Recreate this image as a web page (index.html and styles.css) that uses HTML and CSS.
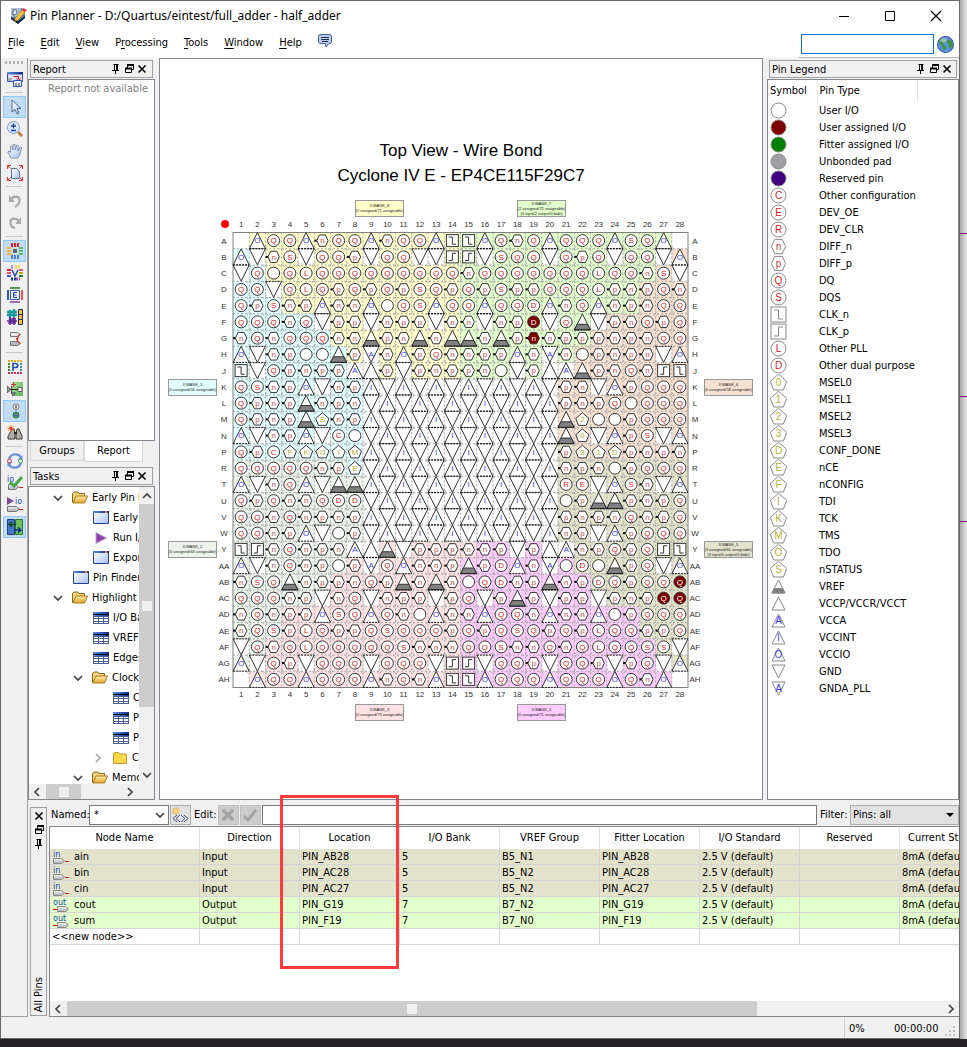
FILE: index.html
```html
<!DOCTYPE html>
<html lang="en">
<head>
    <meta charset="UTF-8">
    <meta name="viewport" content="width=device-width, initial-scale=1.0">
    <title>Pin Planner</title>
    <link rel="stylesheet" href="styles.css">
</head>
<body>
    <!-- shared icons -->
    <svg class="defs" width="0" height="0" aria-hidden="true">
        <defs>
            <linearGradient id="glass" x1="0" y1="0" x2="1" y2="1">
                <stop offset="0" stop-color="#fff"/><stop offset="1" stop-color="#a9c1ee"/>
            </linearGradient>
            <linearGradient id="gold" x1="0" y1="0" x2="0" y2="1">
                <stop offset="0" stop-color="#fdeaa8"/><stop offset="1" stop-color="#e0a52c"/>
            </linearGradient>
            <linearGradient id="steel" x1="0" y1="0" x2="0" y2="1">
                <stop offset="0" stop-color="#f4f4f4"/><stop offset="1" stop-color="#a9adb8"/>
            </linearGradient>
            <linearGradient id="navy" x1="0" y1="0" x2="1" y2="0">
                <stop offset="0" stop-color="#5c8de0"/><stop offset="1" stop-color="#0c2c88"/>
            </linearGradient>
            <linearGradient id="leaf" x1="0" y1="0" x2="1" y2="1">
                <stop offset="0" stop-color="#a8dc98"/><stop offset="1" stop-color="#5db552"/>
            </linearGradient>
        </defs>
        <symbol id="i-pin" viewBox="0 0 10 10"><path d="M2.500.5h5M3.500.5v6M6.500.5v6M5.500.5v6M1 6.500h7M4.500 6.500V10" fill="none" stroke="#000"/></symbol>
        <symbol id="i-restore" viewBox="0 0 10 10"><path d="M3.500 4V1.500h6v4H7M1.500 4.500h6v4h-6z" fill="none" stroke="#000"/><path d="M3 0h7v2H3zM1 3.500h7v2H1z"/></symbol>
        <symbol id="i-close" viewBox="0 0 10 10"><path d="M1.500 1.500l7 7M8.500 1.500l-7 7" stroke="#000" stroke-width="1.600"/></symbol>
        <symbol id="i-down" viewBox="0 0 10 10"><path d="M1 3l4 4 4-4" fill="none" stroke="#444" stroke-width="1.700"/></symbol>
        <symbol id="i-up" viewBox="0 0 10 10"><path d="M1 7l4-4 4 4" fill="none" stroke="#444" stroke-width="1.700"/></symbol>
        <symbol id="i-left" viewBox="0 0 10 10"><path d="M7 1L3 5l4 4" fill="none" stroke="#444" stroke-width="1.700"/></symbol>
        <symbol id="i-right" viewBox="0 0 10 10"><path d="M3 1l4 4-4 4" fill="none" stroke="#444" stroke-width="1.700"/></symbol>
        <symbol id="i-closed" viewBox="0 0 10 10"><path d="M3 1l4 4-4 4" fill="none" stroke="#a6a6a6" stroke-width="1.700"/></symbol>
        <symbol id="i-open" viewBox="0 0 16 16"><path d="M.5 12.500V3.500L2 2h4l1 1.500h5.500V6" fill="#f6d67a" stroke="#8a6420"/><path d="M.8 13L4 6h11.500l-3 7z" fill="url(#gold)" stroke="#a87a1e"/></symbol>
        <symbol id="i-folder" viewBox="0 0 16 16"><path d="M1.500 13.500v-10L3 2.500h3.500L8 4h6.500v9.500z" fill="#ffd94a" stroke="#c49a28"/></symbol>
        <symbol id="i-win" viewBox="0 0 16 16"><path d="M.5 1.500h15v12H.5z" fill="url(#glass)" stroke="#1d3f96"/><path d="M0 1h16v2H0z" fill="url(#navy)"/><path d="M12 1h2v2h-2z" fill="#f08020"/></symbol>
        <symbol id="i-table" viewBox="0 0 16 16"><path d="M0 2h16v4H0z" fill="url(#navy)"/><path d="M0 4h16v1H0z" fill="#000"/><path d="M0 6h16v8H0z" fill="#4a5f90"/><path d="M1 7h4v1H1zM6 7h4v1H6zM11 7h4v1h-4zM1 9h4v2H1zM6 9h4v2H6zM11 9h4v2h-4zM1 12h4v1H1zM6 12h4v1H6zM11 12h4v1h-4z" fill="#fff"/></symbol>
        <symbol id="i-run" viewBox="0 0 16 16"><path d="M3 2.500L13.500 8 3 13.500z" fill="#8e44ad" stroke="#b9a6c8"/></symbol>
        <symbol id="i-port-in" viewBox="0 0 16 6"><path d="M.5.500h8l3 2.500-3 2.500h-8z" fill="url(#steel)" stroke="#888"/><path d="M12 3.500h4" stroke="#e02020"/></symbol>
        <symbol id="i-port-out" viewBox="0 0 16 6"><path d="M4.500.500h8l3 2.500-3 2.500h-8z" fill="url(#steel)" stroke="#888"/><path d="M0 3.500h4" stroke="#e02020"/></symbol>
    </svg>

    <div class="window">
        <header class="titlebar">
            <svg class="app-icon" viewBox="0 0 18 18"><path d="M2 1h11l3 4v6l-7 6-7-5z" fill="#5f83a8"/><path d="M2 1l10 0-1 8-9 1z" fill="#aebfd2"/><path d="M4 3v5h2l2-2V4L6.500 3z" fill="#e6edf4" stroke="#4a6384"/><path d="M2 12l7 5 7-6v-2l-7 5-7-4z" fill="#1d2940"/><path d="M6 12L13 3l3 2-7 8-3 1z" fill="#ffc23a" stroke="#b97b14" stroke-width=".6"/><path d="M13 3l1.500-2L18 3l-2 2z" fill="#e0343c"/></svg>
            <h1 class="title">Pin Planner - D:/Quartus/eintest/full_adder - half_adder</h1>
            <div class="window-buttons">
                <button class="win-btn" aria-label="Minimize"><svg viewBox="0 0 12 12"><path d="M1 6.500h10" stroke="#000"/></svg></button>
                <button class="win-btn" aria-label="Maximize"><svg viewBox="0 0 12 12"><path d="M1.500 1.500h9v9h-9z" fill="none" stroke="#000"/></svg></button>
                <button class="win-btn" aria-label="Close"><svg viewBox="0 0 12 12"><path d="M1 1l10 10M11 1L1 11" stroke="#000" stroke-width="1.200"/></svg></button>
            </div>
        </header>

        <div class="menubar">
            <nav class="menu">
                <button><u>F</u>ile</button>
                <button><u>E</u>dit</button>
                <button><u>V</u>iew</button>
                <button>P<u>r</u>ocessing</button>
                <button><u>T</u>ools</button>
                <button><u>W</u>indow</button>
                <button><u>H</u>elp</button>
                <button aria-label="Feedback"><svg width="14" height="14" viewBox="0 0 14 14"><path d="M1.500.5h11l1 1.500v6l-1 1.500H11L8 13 7.500 9.500h-6L.5 8V2z" fill="#b9cbe6" stroke="#46628f"/><path d="M3 3.500h8M3 5.500h8M4 7.500h6" stroke="#1e3257"/></svg></button>
            </nav>
            <div class="search">
                <input type="text" aria-label="Search">
                <svg class="globe" viewBox="0 0 16 16"><circle cx="8" cy="8" r="7.500" fill="#5c93e6" stroke="#36589c"/><path d="M2 4l3-2 3 1 1 2-3 1 0 2 3 2-1 3-2 1-1-4-2-2zM10 3l3 1 2 4-2 4-2-1 0-3-2-2z" fill="#3f9440"/><ellipse cx="6" cy="4" rx="3" ry="2" fill="#fff" opacity=".45"/></svg>
            </div>
        </div>

        <div class="workspace">
            <aside class="toolbar">
                <div class="grip"></div>
                <button class="tool" aria-label="Detach window"><svg viewBox="0 0 16 16"><path d="M.5 1.500h15v9H.5z" fill="#dfe5ee" stroke="#2a56b0"/><path d="M0 1h16v2.500H0z" fill="url(#navy)"/><path d="M2 7v3M4 7v3" stroke="#777"/><path d="M6.500 5.500h5v3M9.500 7.500l2 2.500 2-2.500" fill="none" stroke="#d0103c"/><path d="M6.500 9.500h8v6h-8z" fill="#eef" stroke="#2a56b0"/><path d="M9 12v3M12 12v3" stroke="#333"/></svg></button>
                <hr>
                <button class="tool on" aria-label="Selection tool"><svg viewBox="0 0 16 16"><path d="M5 1v12l3-2.500 2 4.500 2-1-2-4.500h4z" fill="url(#glass)" stroke="#536a86"/></svg></button>
                <button class="tool" aria-label="Zoom tool"><svg viewBox="0 0 16 16"><path d="M11 11l4 4" stroke="#c08440" stroke-width="3"/><circle cx="6.500" cy="6.500" r="6" fill="#dbe8fa" stroke="#7e9cc4"/><path d="M4 5h5M6.500 2.500v5M4 9.500h5" stroke="#16449c" stroke-width="1.300"/></svg></button>
                <button class="tool" aria-label="Hand tool"><svg viewBox="0 0 16 16"><path d="M4 15L1 9.500 1.500 8l2 1.500V3.500L5 3l1 4V1.500h1.800L8.500 7l1-5 1.700.3L11 8l2-4 1.500.5L13 11l-2 4z" fill="url(#glass)" stroke="#6c83a4" stroke-width=".8"/></svg></button>
                <button class="tool" aria-label="Fit in window"><svg viewBox="0 0 16 16"><path d="M4.500 3.500h5l3 3v7h-8z" fill="url(#glass)" stroke="#5d7595"/><path d="M.5 4V.5H4M12 .5h3.500V4M.5 12v3.500H4M12 15.500h3.500V12M.5.5l3 3M15.500.5l-3 3M.5 15.500l3-3M15.500 15.500l-3-3" fill="none" stroke="#e8303a"/></svg></button>
                <hr>
                <button class="tool" aria-label="Undo"><svg viewBox="0 0 16 16"><path d="M3.500 6.500C7 2 13 3 12.500 7.500c0 3-2 5-4.500 6.500" fill="none" stroke="#aaa" stroke-width="2.200"/><path d="M2 2v7h6z" fill="#aaa"/></svg></button>
                <button class="tool" aria-label="Redo"><svg viewBox="0 0 16 16"><path d="M12.500 6.500C9 2 3 3 3.500 7.500c0 3 2 5 4.500 5.500" fill="none" stroke="#aaa" stroke-width="2.200"/><path d="M14 2v7H8z" fill="#aaa"/></svg></button>
                <hr>
                <button class="tool on" aria-label="Show I/O banks"><svg viewBox="0 0 16 16"><path d="M4 2h8" stroke="#e02028" stroke-width="4" stroke-dasharray="2 1"/><path d="M4 14h8" stroke="#4a7fe0" stroke-width="4" stroke-dasharray="2 1"/><path d="M2 4v8" stroke="#ffb020" stroke-width="4" stroke-dasharray="2 1"/><path d="M14 4v8" stroke="#5cb85c" stroke-width="4" stroke-dasharray="2 1"/><path d="M6 6h4v4H6z" fill="#666"/></svg></button>
                <button class="tool" aria-label="Show VREF groups"><svg viewBox="0 0 16 16"><path d="M4 2h3" stroke="#c98ae8" stroke-width="4" stroke-dasharray="2 1"/><path d="M8 2h5" stroke="#f0e060" stroke-width="4" stroke-dasharray="2 1"/><path d="M4 14h5" stroke="#1c3f9c" stroke-width="3" stroke-dasharray="2 1"/><path d="M9 14h4" stroke="#9c50b8" stroke-width="3" stroke-dasharray="2 1"/><path d="M0 5h4" stroke="#e02028" stroke-width="2"/><path d="M0 8h4" stroke="#e02028" stroke-width="1.500"/><path d="M0 11h4" stroke="#3a66d8" stroke-width="2"/><path d="M12 5h4" stroke="#e0508c" stroke-width="2"/><path d="M12 8h4" stroke="#b8a800" stroke-width="2"/><path d="M12 11h4" stroke="#2c7a2c" stroke-width="2"/><path d="M5 5l3 6 3-6" fill="none" stroke="#2a50b0" stroke-width="1.600"/></svg></button>
                <button class="tool" aria-label="Show edges"><svg viewBox="0 0 16 16"><path d="M3.500 3.500h9v9h-9z" fill="#f1f5ff" stroke="#3457a8"/><path d="M3 1h10" stroke="#3c8a3c" stroke-width="1.800"/><path d="M3 15h10" stroke="#9858b4" stroke-width="1.800"/><path d="M1 3v10" stroke="#2448b0" stroke-width="1.800"/><path d="M15 3v10" stroke="#f04040" stroke-width="1.800"/><path d="M10 5.500H6.500v5H10M6.500 8h3" fill="none" stroke="#1c3f9c"/></svg></button>
                <button class="tool" aria-label="Show DQ/DQS pins"><svg viewBox="0 0 16 16"><path d="M3 1v8M7 0v8M0 3h10M0 6h10" stroke="#1c9a9a" stroke-width="2.400"/><path d="M2 9h7v6H1z" fill="#8848b0"/><path d="M3 8v8M7 8v8M0 12h10" stroke="#5c2a90" stroke-width="1.500"/><path d="M11.500.5h4v15h-4z" fill="#ffc020" stroke="#1a2c70"/><path d="M11 5.500h5M11 10.500h5" stroke="#1a2c70"/></svg></button>
                <button class="tool" aria-label="Show differential pairs"><svg viewBox="0 0 16 16"><path d="M3.500 1.500h7l3 2-3 2h-7zM3.500 10.500h7l3 2-3 2h-7z" fill="url(#steel)" stroke="#777"/><path d="M13 3.500C9 5 13 8 9 8c3 0 0 3 4 4" fill="none" stroke="#e02828" stroke-width="1.300"/></svg></button>
                <hr>
                <button class="tool" aria-label="Show pins"><svg viewBox="0 0 16 16"><path d="M1 2h14" stroke="#e8a820" stroke-width="2" stroke-dasharray="2 1"/><path d="M1 14h14" stroke="#d03050" stroke-width="2" stroke-dasharray="2 1"/><path d="M2 4v9" stroke="#3c8a2c" stroke-width="2" stroke-dasharray="2 1"/><path d="M14 4v9" stroke="#4a8a9c" stroke-width="2" stroke-dasharray="2 1"/><path d="M6 12V4.500h2.500c3 0 3 4 0 4H6" fill="none" stroke="#2a50b0" stroke-width="1.700"/></svg></button>
                <button class="tool" aria-label="Board view"><svg viewBox="0 0 16 16"><path d="M5 1h11v14H5z" fill="url(#leaf)"/><path d="M0 5v7l4-3.500zM4.500 5v8" fill="#999" stroke="#555"/><path d="M4 8.500h7" stroke="#222"/><path d="M11 6.500h4v4h-4z" fill="#eee" stroke="#666"/><path d="M4 3.500h5M6.500 1v5" stroke="#d03040"/><path d="M4 12h5M5 14h3" stroke="#4a2a7a"/></svg></button>
                <button class="tool on" aria-label="Show pin numbers"><svg viewBox="0 0 16 16"><circle cx="9" cy="4" r="3" fill="#ddd" stroke="#888"/><path d="M9 2.500v3" stroke="#333"/><circle cx="9" cy="12" r="3" fill="#5cb85c" stroke="#2a6a4a"/><circle cx="9" cy="12" r="1.200" fill="#eef" stroke="#1c3f9c"/></svg></button>
                <button class="tool" aria-label="Find pins"><svg viewBox="0 0 16 16"><path d="M3 8l2-4h2l1 4v6H1v-3zM9 8l1-4h2l3 7v3H9z" fill="#b4b0a4" stroke="#3a3832"/><path d="M7 8h3" stroke="#222" stroke-width="2"/><path d="M4 0v7M.5 3.500h7M1.500 1l5 5M6.500 1l-5 5" stroke="#e88a20"/><circle cx="4" cy="3.500" r="1.500" fill="#e03050"/></svg></button>
                <hr>
                <button class="tool" aria-label="Swap pins"><svg viewBox="0 0 16 16"><path d="M2 6c2-6 10-6 12-1M14 10c-2 6-10 6-12 1" fill="none" stroke="#6d94d8" stroke-width="2.400"/><path d="M15.500 2v5h-5zM.5 14V9h5z" fill="#6d94d8"/><circle cx="2.500" cy="8" r="2" fill="#fff" stroke="#e03050"/><circle cx="13.500" cy="8" r="2" fill="#fff" stroke="#3c9a4c"/></svg></button>
                <button class="tool" aria-label="Live I/O check"><svg viewBox="0 0 16 16"><text x="0" y="7" class="port-text">io</text><path d="M1.500 9.500h7l3 2.500-3 2.500h-7z" fill="url(#steel)" stroke="#777"/><path d="M12 12.500h4" stroke="#e02020"/><path d="M3 7l4 4 8-9" fill="none" stroke="#4aa84a" stroke-width="3"/></svg></button>
                <button class="tool" aria-label="Run I/O analysis"><svg viewBox="0 0 16 16"><path d="M0 0l7 4-7 4z" fill="#7d4a9c"/><text x="8" y="7" class="port-text">io</text><path d="M.5 9.500h9l3 2.500-3 2.500h-9z" fill="url(#steel)" stroke="#777"/><path d="M12 12.500h4" stroke="#e02020"/></svg></button>
                <button class="tool on" aria-label="Pin migration"><svg viewBox="0 0 16 16"><path d="M.5.500h7v15h-7z" fill="#4a78c8" stroke="#1c3f8c"/><path d="M8.500.500h7v15h-7z" fill="#6cc05c" stroke="#2c7a2c"/><path d="M9 5.500H2M5 3L2 5.500 5 8" fill="none" stroke="#0c4a20" stroke-width="1.400"/><path d="M7 11h7M11 8.500l3 2.500-3 2.500" fill="none" stroke="#0c2c88" stroke-width="1.400"/></svg></button>
            </aside>

            <div class="docks">
                <div class="upper">
                    <div class="left-dock">
                        <section class="dock">
                            <div class="dock-title"><h2>Report</h2><button aria-label="Auto hide"><svg><use href="#i-pin"/></svg></button><button aria-label="Float"><svg><use href="#i-restore"/></svg></button><button aria-label="Close"><svg><use href="#i-close"/></svg></button></div>
                            <div class="dock-body report">Report not available</div>
                            <div class="tabs">
                                <button class="tab">Groups</button>
                                <button class="tab active">Report</button>
                            </div>
                        </section>
                        <section class="dock tasks">
                            <div class="dock-title"><h2>Tasks</h2><button aria-label="Auto hide"><svg><use href="#i-pin"/></svg></button><button aria-label="Float"><svg><use href="#i-restore"/></svg></button><button aria-label="Close"><svg><use href="#i-close"/></svg></button></div>
                            <div class="dock-body tree-box">
                                <ul class="tree" id="tree"></ul>
                                <div class="vscroll"><svg><use href="#i-up"/></svg><div class="thumb"></div><svg><use href="#i-down"/></svg></div>
                                <div class="hscroll"><svg><use href="#i-left"/></svg><div class="thumb"></div><svg><use href="#i-right"/></svg></div>
                            </div>
                        </section>
                    </div>

                    <main class="canvas">
                        <p class="device">Top View - Wire Bond</p>
                        <p class="device">Cyclone IV E - EP4CE115F29C7</p>
                        <svg class="package" id="package" viewBox="0 0 586 522" width="586" height="522"></svg>
                    </main>

                    <section class="dock legend-dock">
                        <div class="dock-title"><h2>Pin Legend</h2><button aria-label="Auto hide"><svg><use href="#i-pin"/></svg></button><button aria-label="Float"><svg><use href="#i-restore"/></svg></button><button aria-label="Close"><svg><use href="#i-close"/></svg></button></div>
                        <div class="dock-body">
                            <table class="legend">
                                <thead><tr><th>Symbol</th><th>Pin Type</th><th></th></tr></thead>
                                <tbody id="legend"></tbody>
                            </table>
                        </div>
                    </section>
                </div>

                <section class="pins-dock">
                    <div class="side-title">
                        <button aria-label="Close"><svg><use href="#i-close"/></svg></button>
                        <button aria-label="Float"><svg><use href="#i-restore"/></svg></button>
                        <button aria-label="Auto hide"><svg><use href="#i-pin"/></svg></button>
                        <h2>All Pins</h2>
                    </div>
                    <div class="pins">
                        <div class="filters">
                            <label for="named">Named:</label>
                            <span class="combo named"><select id="named"><option>*</option></select><svg><use href="#i-down"/></svg></span>
                            <button class="flat" aria-label="Node finder"><svg viewBox="0 0 18 18"><path d="M6 9l-4 3.500L6 16M9 9l-4 3.500L9 16M10 9l4 3.500-4 3.500M13 9l4 3.500-4 3.500" fill="none" stroke="#3c5484"/><path d="M5 1v8M1 5h8M2 2l6 6M8 2L2 8" stroke="#f0a820"/><circle cx="5" cy="5" r="1.500" fill="#ffe860"/></svg></button>
                            <label class="edit-label" for="edit">Edit:</label>
                            <button class="flat off" aria-label="Cancel edit"><svg viewBox="0 0 18 18"><path d="M4 4l10 10M14 4L4 14" stroke="#a4a4a4" stroke-width="3.500"/></svg></button>
                            <button class="flat off" aria-label="Accept edit"><svg viewBox="0 0 18 18"><path d="M3 10l4 4 8-10" fill="none" stroke="#a4a4a4" stroke-width="3"/></svg></button>
                            <input class="edit" id="edit" type="text">
                            <label class="filter-label" for="filter">Filter:</label>
                            <span class="combo filter"><select id="filter"><option>Pins: all</option></select><svg viewBox="0 0 10 10"><path d="M1 3h8L5 7z"/></svg></span>
                        </div>
                        <div class="grid-box">
                            <table class="nodes">
                                <thead>
                                    <tr><th class="wide">Node Name</th><th>Direction</th><th>Location</th><th>I/O Bank</th><th>VREF Group</th><th>Fitter Location</th><th>I/O Standard</th><th>Reserved</th><th>Current Strength</th></tr>
                                </thead>
                                <tbody>
                                    <tr class="bank5"><td><span class="port">in<svg><use href="#i-port-in"/></svg></span>ain</td><td>Input</td><td>PIN_AB28</td><td>5</td><td>B5_N1</td><td>PIN_AB28</td><td>2.5 V (default)</td><td></td><td>8mA (default)</td></tr>
                                    <tr class="bank5"><td><span class="port">in<svg><use href="#i-port-in"/></svg></span>bin</td><td>Input</td><td>PIN_AC28</td><td>5</td><td>B5_N2</td><td>PIN_AC28</td><td>2.5 V (default)</td><td></td><td>8mA (default)</td></tr>
                                    <tr class="bank5"><td><span class="port">in<svg><use href="#i-port-in"/></svg></span>cin</td><td>Input</td><td>PIN_AC27</td><td>5</td><td>B5_N2</td><td>PIN_AC27</td><td>2.5 V (default)</td><td></td><td>8mA (default)</td></tr>
                                    <tr class="bank7"><td><span class="port">out<svg><use href="#i-port-out"/></svg></span>cout</td><td>Output</td><td>PIN_G19</td><td>7</td><td>B7_N2</td><td>PIN_G19</td><td>2.5 V (default)</td><td></td><td>8mA (default)</td></tr>
                                    <tr class="bank7"><td><span class="port">out<svg><use href="#i-port-out"/></svg></span>sum</td><td>Output</td><td>PIN_F19</td><td>7</td><td>B7_N0</td><td>PIN_F19</td><td>2.5 V (default)</td><td></td><td>8mA (default)</td></tr>
                                    <tr><td>&lt;&lt;new node&gt;&gt;</td><td></td><td></td><td></td><td></td><td></td><td></td><td></td><td></td></tr>
                                </tbody>
                            </table>
                            <div class="hscroll"><svg><use href="#i-left"/></svg><div class="thumb"></div><svg><use href="#i-right"/></svg></div>
                        </div>
                    </div>
                    <div class="marker"></div>
                </section>
            </div>
        </div>

        <footer class="statusbar">
            <span class="progress">0%</span>
            <span class="elapsed">00:00:00</span>
            <svg class="size-grip" viewBox="0 0 12 12"><path d="M8 0h2v2H8zM4 4h2v2H4zM8 4h2v2H8zM0 8h2v2H0zM4 8h2v2H4zM8 8h2v2H8z" fill="#bfbfbf"/></svg>
        </footer>
    </div>
    <script src="script.js"></script>
</body>
</html>
```
FILE: styles.css
```css
* {
    box-sizing: border-box;
}
body {
    margin: 0;
    height: 100vh;
    padding: 0 7px 8px 0;
    font-family: "DejaVu Sans Condensed", "DejaVu Sans", sans-serif;
    font-size: 11px;
    line-height: 16px;
    color: #000;
    background:
        linear-gradient(#231f25, #231f25) left bottom / 100% 8px no-repeat,
        linear-gradient(#800080, #800080) right 0 top 233px / 7px 1px no-repeat,
        linear-gradient(#800080, #800080) right 0 top 396px / 7px 1px no-repeat,
        linear-gradient(#800080, #800080) right 0 top 521px / 7px 1px no-repeat,
        linear-gradient(to right, #a8a8a8, #e8e8e8) right top / 7px 100% no-repeat,
        #f0f0f0;
}
h1, h2, p, ul {
    margin: 0;
    padding: 0;
    font-size: inherit;
    font-weight: normal;
}
button {
    border: 0;
    padding: 0;
    background: none;
    font: inherit;
    color: inherit;
}
input, select {
    font: inherit;
    color: inherit;
    border-radius: 0;
    margin: 0;
}
table {
    border-collapse: collapse;
}
.defs {
    position: absolute;
}
.port-text {
    font: 9px "DejaVu Sans Condensed", "DejaVu Sans", sans-serif;
    fill: #1c4cb0;
}

/* window frame */
.window {
    height: 100%;
    display: flex;
    flex-direction: column;
    background: #f0f0f0;
    border: 1px solid #6b696c;
    overflow: hidden;
}
.titlebar {
    display: flex;
    align-items: center;
    height: 30px;
    padding-left: 8px;
    background: #fff;
}
.app-icon {
    width: 18px;
    height: 18px;
}
.title {
    flex: 1;
    padding-left: 3px;
    font-family: "Noto Sans", sans-serif;
    font-size: 12px;
}
.window-buttons {
    display: flex;
}
.win-btn {
    width: 46px;
    height: 28px;
}
.win-btn svg {
    width: 12px;
    height: 12px;
    display: block;
    margin: auto;
}
.menubar {
    display: flex;
    justify-content: space-between;
    height: 27px;
    background: #fff;
}
.menu {
    display: flex;
    gap: 16px;
    padding: 2px 7px 0;
    height: 22px;
}
.menu u {
    text-underline-offset: 2px;
}
.search {
    display: flex;
    gap: 3px;
    padding: 3px 5px 0 2px;
    border-bottom: 1px solid #b0b0b0;
}
.search input {
    width: 133px;
    height: 20px;
    border: 1px solid #0078d7;
}
.globe {
    width: 17px;
    height: 17px;
    margin-top: 2px;
}
.workspace {
    flex: 1;
    display: flex;
    min-height: 0;
}

/* tool strip */
.toolbar {
    width: 27px;
    padding: 2px 1px 0 2px;
    border: solid #a0a0a0;
    border-width: 0 1px 1px 0;
}
.grip {
    height: 3px;
    margin: 1px 3px 4px 2px;
    background: repeating-linear-gradient(to right, #b4b4b4 0 2px, transparent 2px 4px);
}
.tool {
    display: grid;
    place-items: center;
    width: 23px;
    height: 22px;
    border: 1px solid transparent;
}
.tool.on {
    background: #c2dcf3;
    border-color: #90c8f6;
}
.tool svg {
    width: 16px;
    height: 16px;
}
.toolbar hr {
    height: 1px;
    margin: 2px 3px 3px;
    border: 0;
    background: #c8c8c8;
}

/* docks */
.docks {
    flex: 1;
    display: flex;
    flex-direction: column;
    min-width: 0;
}
.upper {
    flex: 1;
    display: flex;
    gap: 4px;
    min-height: 0;
}
.left-dock {
    width: 127px;
    display: flex;
    flex-direction: column;
}
.dock {
    display: flex;
    flex-direction: column;
    padding-top: 2px;
}
.dock-title {
    display: flex;
    align-items: center;
    gap: 3px;
    height: 18px;
    margin: 0 2px 1px;
    padding: 0 5px 0 2px;
    border: 1px solid #a0a0a0;
}
.dock-title h2 {
    flex: 1;
    padding-top: 2px;
}
.dock-title button, .dock-title svg, .side-title svg {
    width: 10px;
    height: 10px;
    display: block;
}
.dock-body {
    flex: 1;
    background: #fff;
    border: 1px solid #828790;
}
.report {
    flex: none;
    height: 362px;
    padding: 1px 6px 0 0;
    text-align: right;
    color: #808080;
}
.tabs {
    display: flex;
    align-items: flex-start;
    padding-left: 2px;
}
.tab {
    width: 54px;
    height: 20px;
    border: 1px solid #d9d9d9;
    border-top: 0;
}
.tab.active {
    width: 59px;
    height: 21px;
    background: #fff;
}
.tasks {
    flex: 1;
    padding-top: 5px;
    min-height: 0;
}
.tree-box {
    display: grid;
    grid-template-columns: 1fr 15px;
    grid-template-rows: 1fr 15px;
    min-height: 0;
}
.tree {
    list-style: none;
    padding-top: 1px;
    overflow: hidden;
    min-height: 0;
}
.tree li {
    display: flex;
    align-items: center;
    gap: 4px;
    height: 20px;
    white-space: nowrap;
}
.tree li svg {
    flex: none;
    width: 16px;
    height: 16px;
}
.tree li .twist {
    width: 10px;
    height: 10px;
    margin-right: 5px;
}
.level-1 { padding-left: 24px; }
.level-2 { padding-left: 44px; }
.level-3 { padding-left: 64px; }
.level-4 { padding-left: 84px; }

/* scroll bars */
.vscroll, .hscroll {
    display: flex;
    align-items: center;
    background: #f0f0f0;
}
.vscroll {
    flex-direction: column;
    padding: 4px 0;
}
.hscroll {
    padding: 0 3px;
    height: 15px;
}
.vscroll svg, .hscroll svg {
    width: 10px;
    height: 10px;
    flex: none;
}
.thumb {
    display: grid;
    place-items: center;
    background: #cdcdcd;
}
.thumb::before {
    content: "";
    width: 10px;
    height: 10px;
    background: #f0f0f0;
}
.vscroll .thumb {
    width: 15px;
    height: 203px;
    margin: 3px 0 auto;
}
.hscroll .thumb {
    width: 35px;
    height: 15px;
    margin: 0 auto 0 4px;
}
.tree-box .hscroll {
    grid-column: 1 / 3;
    padding-right: 19px;
}

/* package view */
.canvas {
    flex: 1;
    display: flex;
    flex-direction: column;
    align-items: center;
    padding-top: 79px;
    background: #fff;
    border: 1px solid #828790;
}
.device {
    font: 17px/25px "Liberation Sans", Arial, sans-serif;
}
.package {
    margin-top: 12px;
    font-family: "Liberation Sans", Arial, sans-serif;
    text-anchor: middle;
}
.lattice {
    fill: none;
    stroke: #a8a8a8;
    stroke-dasharray: 2 2;
}
.axis {
    font-size: 8px;
    fill: #333;
}
.bank-label {
    stroke: #999;
}
.bank-text {
    font-size: 4px;
    fill: #222;
}
.shape {
    fill: #fff;
    stroke: #333;
}
.base {
    stroke: #111;
    stroke-dasharray: 2 1;
}
.glyph {
    font-size: 8px;
}
.tick {
    fill: #000;
}
.red { fill: #d81818; }
.pink { fill: #c84848; }
.blue { fill: #3c3cf0; }
.olive { fill: #b8b030; }
.clear { fill: none; }
.grey { fill: #808080; }
.user { fill: #800000; }
.user-glyph { fill: #fff; }

/* legend */
.legend-dock {
    width: 192px;
}
.legend-dock .dock-title {
    padding-right: 4px;
}
.legend {
    width: 100%;
}
.legend th {
    height: 22px;
    padding: 0 2px;
    text-align: left;
    font-weight: normal;
    border-right: 1px solid #e5e5e5;
}
.legend th:first-child { width: 49px; }
.legend th:nth-child(2) { width: 100px; }
.legend th:last-child { border: 0; }
.legend td {
    height: 17px;
    padding: 0 2px;
    white-space: nowrap;
}
.legend svg {
    display: block;
    width: 17px;
    height: 17px;
    font-family: "Liberation Sans", Arial, sans-serif;
    text-anchor: middle;
}
.legend .shape { stroke: #888; }
.legend .glyph { font-size: 10px; }
.legend .base { stroke: #888; stroke-dasharray: none; }
.legend .tick { display: none; }

/* all pins */
.pins-dock {
    position: relative;
    display: flex;
    gap: 2px;
    height: 217px;
    padding: 4px 0 0 2px;
}
.side-title {
    display: flex;
    flex-direction: column;
    align-items: center;
    gap: 4px;
    width: 17px;
    margin: 3px 0 1px;
    padding-top: 3px;
    border: 1px solid #a0a0a0;
}
.side-title h2 {
    margin-top: auto;
    writing-mode: vertical-rl;
    transform: rotate(180deg);
    padding: 3px 0 0;
}
.pins {
    flex: 1;
    display: flex;
    flex-direction: column;
    min-width: 0;
}
.filters {
    display: flex;
    align-items: center;
    gap: 1px;
    height: 22px;
    padding-left: 2px;
}
.filters label {
    width: 37px;
}
.filters .edit-label {
    width: 23px;
    margin-left: 2px;
}
.filters .filter-label {
    width: 31px;
    padding-left: 2px;
}
.combo {
    position: relative;
    height: 20px;
}
.combo select {
    width: 100%;
    height: 100%;
    padding: 0 4px;
    appearance: none;
    background: #fff;
    border: 1px solid #7a7a7a;
}
.combo svg {
    position: absolute;
    right: 4px;
    top: 5px;
    width: 10px;
    height: 10px;
    pointer-events: none;
}
.named { width: 80px; }
.filter { width: 109px; }
.filter select {
    padding: 0 2px;
    background: #e1e1e1;
    border-color: #adadad;
}
.flat {
    width: 21px;
    height: 20px;
    background: #e1e1e1;
    border: 1px solid #adadad;
}
.flat.off {
    background: #ccc;
    border-color: #bfbfbf;
}
.flat svg {
    display: block;
    width: 18px;
    height: 18px;
}
.edit {
    flex: 1;
    min-width: 0;
    height: 20px;
    border: 1px solid #7a7a7a;
}
.grid-box {
    flex: 1;
    display: flex;
    flex-direction: column;
    justify-content: space-between;
    overflow: hidden;
    background: #fff;
    border: 1px solid #828790;
    border-right: 0;
}
.nodes {
    width: 950px;
    table-layout: fixed;
    border-collapse: separate;
    border-spacing: 0;
}
.nodes th {
    width: 100px;
    height: 22px;
    padding: 0;
    font-weight: normal;
    border-right: 1px solid #e0e0e0;
}
.nodes .wide { width: 150px; }
.nodes td {
    height: 16px;
    padding: 1px 2px 0;
    line-height: 14px;
    white-space: nowrap;
    border: solid #d5d5d5;
    border-width: 0 1px 1px 0;
}
.port {
    float: left;
    width: 16px;
    height: 14px;
    margin: 0 5px 0 1px;
    font-size: 9px;
    line-height: 8px;
    color: #1c4cb0;
}
.port svg {
    display: block;
    width: 16px;
    height: 6px;
}
.nodes .bank5 { background: #e3e3cc; }
.nodes .bank7 { background: #e3ffcc; }
.grid-box .hscroll .thumb {
    width: 690px;
}
.marker {
    position: absolute;
    left: 252px;
    top: -5px;
    width: 119px;
    height: 174px;
    border: 3px solid #fc3b3b;
    pointer-events: none;
}
.statusbar {
    display: flex;
    justify-content: flex-end;
    height: 21px;
    padding-right: 2px;
    line-height: 24px;
}
.progress {
    width: 50px;
    padding-left: 4px;
    border-left: 1px solid #d0d0d0;
}
.elapsed {
    width: 51px;
}
.size-grip {
    width: 12px;
    height: 12px;
    align-self: flex-end;
}
```
FILE: script.js
```js
const NS = 'http://www.w3.org/2000/svg';

function el(parent, name, attrs, text) {
    const node = document.createElementNS(NS, name);
    for (const key in attrs) node.setAttribute(key, attrs[key]);
    if (text !== undefined) node.textContent = text;
    parent.appendChild(node);
    return node;
}

// code -> [shape, letter, letter colour]
const PINS = {
    o: ['circle', '', ''], Q: ['circle', 'Q', 'red'], S: ['circle', 'S', 'red'],
    L: ['circle', 'L', 'red'], C: ['circle', 'C', 'red'], R: ['circle', 'R', 'red'],
    E: ['circle', 'E', 'red'], D: ['circle', 'D', 'red'],
    n: ['hex', 'n', 'pink'], p: ['hex', 'p', 'pink'],
    0: ['pent', '0', 'olive'], 1: ['pent', '1', 'olive'], 2: ['pent', '2', 'olive'],
    3: ['pent', '3', 'olive'], d: ['pent', 'D', 'olive'], e: ['pent', 'E', 'olive'],
    f: ['pent', 'F', 'olive'], i: ['pent', 'I', 'olive'], k: ['pent', 'K', 'olive'],
    m: ['pent', 'M', 'olive'], t: ['pent', 'O', 'olive'], s: ['pent', 'S', 'olive'],
    x: ['clkn', '', ''], y: ['clkp', '', ''], v: ['vref', '', ''],
    '^': ['up', '', ''], a: ['up', 'A', 'blue'], I: ['up', 'I', 'blue'], O: ['up', 'O', 'blue'],
    g: ['down', '', ''], G: ['down', 'A', 'blue']
};

// r: radius of round symbols, t: half size of triangles
function drawPin(parent, code, cx, cy, r, t, fill) {
    const [shape, letter, colour] = PINS[code];
    const g = el(parent, 'g', { transform: `translate(${cx} ${cy})` });
    const poly = pts => el(g, 'polygon', { class: 'shape', points: pts.map(([x, y]) => `${x},${y}`).join(' ') });

    if (shape === 'circle') {
        el(g, 'circle', { class: 'shape', r });
    } else if (shape === 'hex') {
        el(g, 'rect', { class: 'tick', x: -r - 2, y: -1, width: 3, height: 2 });
        poly([[-r * .95, 0], [-r * .5, -r * .95], [r * .5, -r * .95], [r * .95, 0], [r * .5, r * .95], [-r * .5, r * .95]]);
    } else if (shape === 'pent') {
        poly([[0, -r * 1.1], [r * 1.1, -r * .15], [r * .65, r], [-r * .65, r], [-r * 1.1, -r * .15]]);
    } else if (shape === 'clkn' || shape === 'clkp') {
        el(g, 'rect', { class: 'shape', x: -r, y: -r, width: r * 2, height: r * 2 });
        const s = shape === 'clkn' ? -1 : 1;
        el(g, 'path', { class: 'shape clear', d: `M${-r * .6} ${r * .6 * s}H0V${-r * .6 * s}H${r * .6}` });
    } else {
        const s = shape === 'down' ? -1 : 1;
        el(g, 'path', { class: 'shape', d: `M${-t} ${t * s}L0 ${-t * s}L${t} ${t * s}` });
        if (shape === 'vref') poly([[-t, t], [-t * .65, t * .3], [t * .65, t * .3], [t, t]]).classList.add('grey');
        el(g, 'line', { class: 'base', x1: -t, x2: t, y1: t * s, y2: t * s });
    }
    if (fill) g.querySelector('.shape').classList.add(fill);
    if (letter) el(g, 'text', { class: `glyph ${fill ? 'user-glyph' : colour}`, y: r * .46 }, letter);
}

const BANKS = {
    1: '#e1ffff', 2: '#ebf3eb', 3: '#ffe3e3', 4: '#ffccff',
    5: '#e3e3cc', 6: '#f5e1d1', 7: '#e3ffcc', 8: '#ffffcc'
};

// row name, pins of columns 1-28, bank of each column
const ROWS = [
    ['A',  '.OQQOnQQOnQQOxxOQnQOQQQOSQO.', '0888888888888877777777777770'],
    ['B',  'OgnSgQQpgQQggyygSQQgQpQgQQgO', '1888888888888877777777777776'],
    ['C',  'gQoQLQQQQQQQQQnQQQQQQQLQQnSg', '1188888888888877777777777766'],
    ['D',  'QQgQLQpQpQpSQpQpSppQQQLpnpQn', '1118888888888877777777777666'],
    ['E',  'QpSnpOnnOoQSOQQOQQDOnQOnpnQQ', '1118888888888877777777777666'],
    ['F',  'QQQnQgppgnppgnngnpDgQvgpnQpQ', '1111188888888877777777766666'],
    ['G',  'nQnQQQnnvpnvnvvnvpnnpppnpnQQ', '1111118888888877777777666666'],
    ['H',  'OgnpoovpGnOpQnnppOnGnopnpngO', '1111111888888877777776666666'],
    ['J',  'xgQpnppa^pgpnppnogp^avpnQnyx', '1111111088888877777006666666'],
    ['K',  'QSnpOgnpIgIgIgIgIgIgpngOpQQQ', '1111111100000000000066666666'],
    ['L',  'QpnpvnpngIgIgIgIgIgIpnpQoQQQ', '1111111100000000000066666666'],
    ['M',  'QpnpvsnpIgIgIgIgIgIgv2oopQQQ', '1111111100000000000066666666'],
    ['N',  'OgnpOgCogIgIgIgIgIgIv0gOpSgO', '1111111100000000000066666666'],
    ['P',  'QpCfktimIgIgIgIgIgIgp31dpnpn', '1111111100000000000056666666'],
    ['R',  'QQQQQnpegIgIgIgIgIgInpnopQQQ', '2222222100000000000055555555'],
    ['T',  'OgnQOgvvIgIgIgIgIgIgREgOSngO', '2222222200000000000055555555'],
    ['U',  'QpQnnQDDgIgIgIgIgIgIopvvpnpQ', '2222222200000000000055555555'],
    ['V',  'QQnQnpnpIgIgIgIgIgIgpnpnQnpQ', '2222222200000000000055555555'],
    ['W',  'QQnpOgopgIgIgIgIgIgInpgOpQQQ', '2222222200000000000055555555'],
    ['Y',  'xynQnpna^vgpppnnpgp^anpQpQyx', '2222222003333334444005555555'],
    ['AA', 'OgnQnpopGQOnnpvpDOnGoDovpQgO', '2222222333333344444445555555'],
    ['AB', 'nSQvnppnQpvnvnoQDnpvnpDQpQQQ', '2222223333333344444444555555'],
    ['AC', 'QQQnpgnQgnppgpQgpvpgppgpnpQQ', '2222233333333344444444455555'],
    ['AD', 'nQnppOSQOQnoOnnOQQnOnnOopQQQ', '2223333333333344444444444555'],
    ['AE', 'nQSpLQppQSQQQpQpQSQpQpLQQppQ', '2223333333333344444444444555'],
    ['AF', 'gQnQLQQQQQSnnnQQSnnQnQLQQSSg', '2233333333333344444444444455'],
    ['AG', 'OgQpgQQQgQQQgyygQQpgQQpgpQgO', '2333333333333344444444444445'],
    ['AH', '.OQQOQQQOnQnOxxOQQQOQQQOQnO.', '0333333333333344444444444440']
];
const ASSIGNED = ['F19', 'G19', 'AB28', 'AC27', 'AC28'];

const PITCH = 16.25;
const LEFT = 65;
const TOP = 32.5;
const SIZE = PITCH * 28;

function drawPackage() {
    const svg = document.getElementById('package');
    const mid = i => PITCH * i + PITCH / 2;

    // bank colours, supply pins stay white
    ROWS.forEach(([, pins, banks], r) => {
        [...pins].forEach((code, c) => {
            if (banks[c] === '0' || 'gGaI^.'.includes(code)) return;
            el(svg, 'rect', { x: LEFT + c * PITCH, y: TOP + r * PITCH, width: PITCH + .3, height: PITCH + .3, fill: BANKS[banks[c]] });
        });
    });

    for (let i = 1; i < 28; i++) {
        el(svg, 'path', { class: 'lattice', d: `M${LEFT + i * PITCH} ${TOP}v${SIZE}M${LEFT} ${TOP + i * PITCH}h${SIZE}` });
        for (let j = 1; j < 28; j++) {
            el(svg, 'circle', { class: 'lattice', cx: LEFT + i * PITCH, cy: TOP + j * PITCH, r: 2 });
        }
    }
    el(svg, 'rect', { x: LEFT, y: TOP, width: SIZE, height: SIZE, fill: 'none', stroke: '#808080' });
    el(svg, 'circle', { cx: 57, cy: 24, r: 4, fill: '#f00' });

    ROWS.forEach(([name, pins], r) => {
        const y = TOP + mid(r);
        [...pins].forEach((code, c) => {
            if (code === '.') return;
            const fill = ASSIGNED.includes(name + (c + 1)) ? 'user' : '';
            drawPin(svg, code, LEFT + mid(c), y, 6, 8, fill);
        });
        el(svg, 'text', { class: 'axis', x: 56, y: y + 3 }, name);
        el(svg, 'text', { class: 'axis', x: 527, y: y + 3 }, name);
        el(svg, 'text', { class: 'axis', x: LEFT + mid(r), y: 27 }, r + 1);
        el(svg, 'text', { class: 'axis', x: LEFT + mid(r), y: 497 }, r + 1);
    });

    const labels = [
        [8, 187, 0, '(0 assigned/71 assignable)'],
        [7, 349, 0, '(2 assigned/72 assignable)', '(0 input/2 output/0 bidir)'],
        [1, 0, 179, '(0 assigned/56 assignable)'],
        [6, 536, 179, '(0 assigned/58 assignable)'],
        [2, 0, 341, '(0 assigned/63 assignable)'],
        [5, 536, 341, '(3 assigned/65 assignable)', '(3 input/0 output/0 bidir)'],
        [3, 187, 504, '(0 assigned/73 assignable)'],
        [4, 349, 504, '(0 assigned/71 assignable)']
    ];
    for (const [bank, x, y, ...lines] of labels) {
        el(svg, 'rect', { class: 'bank-label', x: x + .5, y: y + .5, width: 48, height: 16, fill: BANKS[bank] });
        const first = lines.length > 1 ? 5 : 7;
        [`IOBANK_${bank}`, ...lines].forEach((line, i) => {
            el(svg, 'text', { class: 'bank-text', x: x + 24.5, y: y + first + i * 5 }, line);
        });
    }
}

const LEGEND = [
    ['o', 'User I/O'], ['o', 'User assigned I/O', '#800000'], ['o', 'Fitter assigned I/O', '#008000'],
    ['o', 'Unbonded pad', '#a0a0a4'], ['o', 'Reserved pin', '#400080'],
    ['C', 'Other configuration'], ['E', 'DEV_OE'], ['R', 'DEV_CLR'], ['n', 'DIFF_n'], ['p', 'DIFF_p'],
    ['Q', 'DQ'], ['S', 'DQS'], ['x', 'CLK_n'], ['y', 'CLK_p'], ['L', 'Other PLL'], ['D', 'Other dual purpose'],
    ['0', 'MSEL0'], ['1', 'MSEL1'], ['2', 'MSEL2'], ['3', 'MSEL3'], ['d', 'CONF_DONE'], ['e', 'nCE'],
    ['f', 'nCONFIG'], ['i', 'TDI'], ['k', 'TCK'], ['m', 'TMS'], ['t', 'TDO'], ['s', 'nSTATUS'],
    ['v', 'VREF'], ['^', 'VCCP/VCCR/VCCT'], ['a', 'VCCA'], ['I', 'VCCINT'], ['O', 'VCCIO'],
    ['g', 'GND'], ['G', 'GNDA_PLL']
];

function drawLegend() {
    const body = document.getElementById('legend');
    for (const [code, name, fill] of LEGEND) {
        const row = body.insertRow();
        const svg = el(row.insertCell(), 'svg', { viewBox: '-8.5 -8.5 17 17' });
        drawPin(svg, code, 0, 0, 7.5, 6.5);
        if (fill) svg.querySelector('.shape').style.fill = fill;
        const cell = row.insertCell();
        cell.colSpan = 2;
        cell.textContent = name;
    }
}

// level, icon, label, twist
const TASKS = [
    [1, 'open', 'Early Pin Planning', 'down'], [3, 'win', 'Early Pin Planning...'],
    [3, 'run', 'Run I/O Assignment Analysis'], [3, 'win', 'Export Pin Assignments...'],
    [2, 'win', 'Pin Finder...'], [1, 'open', 'Highlight Pins', 'down'],
    [3, 'table', 'I/O Banks'], [3, 'table', 'VREF Groups'], [3, 'table', 'Edges'],
    [2, 'open', 'Clock Pins', 'down'], [4, 'table', 'CLK Pins'], [4, 'table', 'PLL Inputs'],
    [4, 'table', 'PLL Outputs'], [3, 'folder', 'Clock Regions', 'closed'], [2, 'open', 'Memory Interfaces', 'down']
];

function drawTasks() {
    const tree = document.getElementById('tree');
    for (const [level, icon, label, twist] of TASKS) {
        const item = document.createElement('li');
        item.className = `level-${level}`;
        if (twist) el(el(item, 'svg', { class: 'twist' }), 'use', { href: `#i-${twist}` });
        el(el(item, 'svg', {}), 'use', { href: `#i-${icon}` });
        item.append(label);
        tree.appendChild(item);
    }
}

drawPackage();
drawLegend();
drawTasks();
```
